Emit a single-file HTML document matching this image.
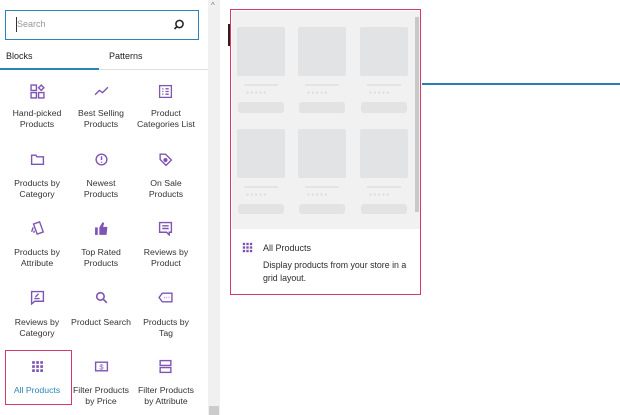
<!DOCTYPE html>
<html><head><meta charset="utf-8"><style>
*{margin:0;padding:0;box-sizing:border-box}
body{width:620px;height:415px;overflow:hidden;background:#fff;font-family:"Liberation Sans",sans-serif;position:relative;color:#1e1e1e}
.abs{position:absolute}
.lbl{position:absolute;width:66px;text-align:center;font-size:8.7px;line-height:11px;color:#333}
.ic{position:absolute;width:15px;height:15px}
.ph{position:absolute;background:#e2e3e5;border-radius:2px}
.ln{position:absolute;height:2px;background:#e4e4e4}
.st{position:absolute;font-size:5px;letter-spacing:1.3px;color:#dcdcdc;line-height:5px}
.bt{position:absolute;height:11px;background:#e3e3e3;border-radius:3px}
</style></head><body>
<div class="abs" style="left:208px;top:0;width:12px;height:415px;background:#f0f0f0"></div>
<div class="abs" style="left:211px;top:1px;font-size:8px;color:#777">&#94;</div>
<div class="abs" style="left:209px;top:406px;width:10px;height:9px;background:#ccc"></div>
<div class="abs" style="left:5px;top:10px;width:194px;height:30px;border:1.5px solid #2b84b8"></div>
<div class="abs" style="left:16px;top:17px;width:1px;height:15px;background:#333"></div>
<div class="abs" style="left:17px;top:19px;font-size:9px;color:#999">Search</div>
<svg class="abs" style="left:173px;top:19px" width="12" height="12" viewBox="0 0 12 12"><circle cx="6.5" cy="5" r="3.6" fill="none" stroke="#222" stroke-width="1.5"/><path d="M4 7.5 1.5 10" stroke="#222" stroke-width="1.6"/></svg>
<div class="abs" style="left:6px;top:51px;font-size:9px">Blocks</div>
<div class="abs" style="left:109px;top:51px;font-size:9px">Patterns</div>
<div class="abs" style="left:0;top:69px;width:208px;height:1px;background:#e0e0e0"></div>
<div class="abs" style="left:0;top:68px;width:99px;height:2px;background:#2b84b8"></div>

<svg class="ic" style="left:30px;top:84px" viewBox="0 0 14 14" fill="none" stroke="#7f54b3" stroke-width="1.3"><rect x="1" y="1" width="5" height="5"/><rect x="1" y="8" width="5" height="5"/><rect x="8" y="8" width="5" height="5"/><path d="M10.5 1 13 3.5 10.5 6 8 3.5Z"/></svg>
<svg class="ic" style="left:94px;top:84px" viewBox="0 0 14 14" fill="none" stroke="#7f54b3" stroke-width="1.3"><path d="M1 10 5 6 8 8 13 3"/></svg>
<svg class="ic" style="left:158px;top:84px" viewBox="0 0 14 14" fill="none" stroke="#7f54b3" stroke-width="1.2"><rect x="1.5" y="1.5" width="11" height="11"/><path d="M4 4.5h1M7 4.5h3M4 7h1M7 7h3M4 9.5h1M7 9.5h3"/></svg>
<svg class="ic" style="left:30px;top:152px" viewBox="0 0 14 14" fill="none" stroke="#7f54b3" stroke-width="1.3"><path d="M1.5 3h4l1 1.5h6v7h-11z"/></svg>
<svg class="ic" style="left:94px;top:152px" viewBox="0 0 14 14" fill="none" stroke="#7f54b3" stroke-width="1.3"><circle cx="7" cy="7" r="5"/><path d="M7 4v3.5M7 9v1"/></svg>
<svg class="ic" style="left:158px;top:152px" viewBox="0 0 14 14" fill="none" stroke="#7f54b3" stroke-width="1.3"><path d="M2 2h5l5.5 5.5-5 5L2 7z"/><circle cx="7" cy="7.5" r="1.3" fill="#7f54b3"/></svg>
<svg class="ic" style="left:30px;top:221px" viewBox="0 0 14 14" fill="none" stroke="#7f54b3" stroke-width="1.3"><rect x="5" y="1.5" width="6" height="10" transform="rotate(-20 8 7)"/><path d="M3 6 1.5 10M4 9l-.5 2"/></svg>
<svg class="ic" style="left:94px;top:221px" viewBox="0 0 14 14" fill="#7f54b3"><rect x="1" y="6" width="2.5" height="7"/><path d="M5 6l3-5 1.5 1-1 3.5h4l-.8 7.5H5z"/></svg>
<svg class="ic" style="left:158px;top:221px" viewBox="0 0 14 14" fill="none" stroke="#7f54b3" stroke-width="1.3"><path d="M1.5 1.5h11v9h-2v2.5l-2.5-2.5h-6.5z"/><path d="M4 4.5h6M4 7h6"/></svg>
<svg class="ic" style="left:30px;top:290px" viewBox="0 0 14 14" fill="none" stroke="#7f54b3" stroke-width="1.3"><path d="M1.5 1.5h11v9h-8l-3 2.5z"/><path d="M4 8h5M5 6.5l3-3"/></svg>
<svg class="ic" style="left:94px;top:290px" viewBox="0 0 14 14" fill="none" stroke="#7f54b3" stroke-width="1.5"><circle cx="6" cy="6" r="3.5"/><path d="M8.5 8.5 12 12"/></svg>
<svg class="ic" style="left:158px;top:290px" viewBox="0 0 14 14" fill="none" stroke="#7f54b3" stroke-width="1.3"><path d="M4 3h9v8H4L1 7z"/><path d="M6 7h.5M8 7h.5M10 7h.5" stroke-width="1.5"/></svg>
<svg class="ic" style="left:30px;top:359px" viewBox="0 0 14 14" fill="#7f54b3"><rect x="2" y="2" width="2.5" height="2.5"/><rect x="5.8" y="2" width="2.5" height="2.5"/><rect x="9.6" y="2" width="2.5" height="2.5"/><rect x="2" y="5.8" width="2.5" height="2.5"/><rect x="5.8" y="5.8" width="2.5" height="2.5"/><rect x="9.6" y="5.8" width="2.5" height="2.5"/><rect x="2" y="9.6" width="2.5" height="2.5"/><rect x="5.8" y="9.6" width="2.5" height="2.5"/><rect x="9.6" y="9.6" width="2.5" height="2.5"/></svg>
<svg class="ic" style="left:94px;top:359px" viewBox="0 0 14 14" fill="none" stroke="#7f54b3" stroke-width="1.3"><rect x="1.5" y="3" width="11" height="8"/><text x="7" y="9.7" font-size="7" text-anchor="middle" fill="#7f54b3" stroke="none" font-family="Liberation Sans">$</text></svg>
<svg class="ic" style="left:158px;top:359px" viewBox="0 0 14 14" fill="none" stroke="#7f54b3" stroke-width="1.3"><rect x="2" y="1.5" width="10" height="4.5"/><rect x="2" y="8" width="10" height="4.5"/></svg>

<div class="lbl" style="left:4px;top:108px">Hand-picked<br>Products</div>
<div class="lbl" style="left:68px;top:108px">Best Selling<br>Products</div>
<div class="lbl" style="left:133px;top:108px">Product<br>Categories List</div>
<div class="lbl" style="left:4px;top:178px">Products by<br>Category</div>
<div class="lbl" style="left:68px;top:178px">Newest<br>Products</div>
<div class="lbl" style="left:133px;top:178px">On Sale<br>Products</div>
<div class="lbl" style="left:4px;top:247px">Products by<br>Attribute</div>
<div class="lbl" style="left:68px;top:247px">Top Rated<br>Products</div>
<div class="lbl" style="left:133px;top:247px">Reviews by<br>Product</div>
<div class="lbl" style="left:4px;top:317px">Reviews by<br>Category</div>
<div class="lbl" style="left:68px;top:317px">Product Search</div>
<div class="lbl" style="left:133px;top:317px">Products by<br>Tag</div>
<div class="abs" style="left:5px;top:350px;width:67px;height:55px;border:1.5px solid #d6386a"></div>
<div class="lbl" style="left:4px;top:385px;color:#2b84b8">All Products</div>
<div class="lbl" style="left:68px;top:385px">Filter Products<br>by Price</div>
<div class="lbl" style="left:133px;top:385px">Filter Products<br>by Attribute</div>

<div class="abs" style="left:228px;top:24px;width:4px;height:22px;background:#3a1a1a"></div>
<div class="abs" style="left:230px;top:9px;width:191px;height:286px;border:1.5px solid #d6386a;background:#fff"></div>
<div class="abs" style="left:232px;top:11px;width:188px;height:218px;background:#f1f1f1"></div>
<div class="abs" style="left:415px;top:17px;width:4px;height:195px;background:#c8c8c8"></div>
<div class="abs" style="left:422px;top:83px;width:198px;height:2px;background:#2a7cb3"></div>

<div class="ph" style="left:237px;top:27px;width:48px;height:49px"></div>
<div class="ph" style="left:298px;top:27px;width:48px;height:49px"></div>
<div class="ph" style="left:360px;top:27px;width:48px;height:49px"></div>
<div class="ph" style="left:237px;top:129px;width:48px;height:49px"></div>
<div class="ph" style="left:298px;top:129px;width:48px;height:49px"></div>
<div class="ph" style="left:360px;top:129px;width:48px;height:49px"></div>
<div class="ln" style="left:244px;top:84px;width:34px"></div>
<div class="ln" style="left:305px;top:84px;width:34px"></div>
<div class="ln" style="left:367px;top:84px;width:34px"></div>
<div class="ln" style="left:244px;top:186px;width:34px"></div>
<div class="ln" style="left:305px;top:186px;width:34px"></div>
<div class="ln" style="left:367px;top:186px;width:34px"></div>
<div class="st" style="left:246px;top:91px">●●●●●</div>
<div class="st" style="left:307px;top:91px">●●●●●</div>
<div class="st" style="left:369px;top:91px">●●●●●</div>
<div class="st" style="left:246px;top:193px">●●●●●</div>
<div class="st" style="left:307px;top:193px">●●●●●</div>
<div class="st" style="left:369px;top:193px">●●●●●</div>
<div class="bt" style="left:238px;top:102px;width:46px"></div>
<div class="bt" style="left:299px;top:102px;width:46px"></div>
<div class="bt" style="left:361px;top:102px;width:46px"></div>
<div class="bt" style="left:238px;top:204px;width:46px;height:10px"></div>
<div class="bt" style="left:299px;top:204px;width:46px;height:10px"></div>
<div class="bt" style="left:361px;top:204px;width:46px;height:10px"></div>

<svg class="abs" style="left:242px;top:242px" width="11" height="11" viewBox="0 0 14 14" fill="#7f54b3"><rect x="1" y="1" width="3" height="3"/><rect x="5.5" y="1" width="3" height="3"/><rect x="10" y="1" width="3" height="3"/><rect x="1" y="5.5" width="3" height="3"/><rect x="5.5" y="5.5" width="3" height="3"/><rect x="10" y="5.5" width="3" height="3"/><rect x="1" y="10" width="3" height="3"/><rect x="5.5" y="10" width="3" height="3"/><rect x="10" y="10" width="3" height="3"/></svg>
<div class="abs" style="left:263px;top:243px;font-size:9px;color:#2c2c2c">All Products</div>
<div class="abs" style="left:263px;top:259px;width:160px;font-size:8.8px;line-height:12.5px;color:#2c2c2c">Display products from your store in a grid layout.</div>
</body></html>
